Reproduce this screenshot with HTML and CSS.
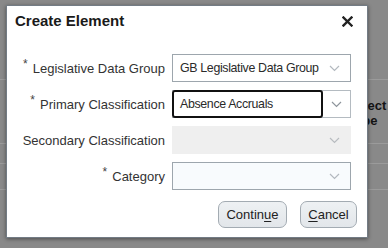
FILE: index.html
```html
<!DOCTYPE html>
<html>
<head>
<meta charset="utf-8">
<link rel="stylesheet" href="styles.css">
</head>
<body>
<div class="page">
  <div class="bg-row bg-row-top"></div>
  <div class="bg-row bg-row-head"><div class="bg-head">Select<br>Type</div></div>
  <div class="bg-row bg-row-a"></div>
  <div class="bg-row bg-row-b"></div>
  <div class="bg-row bg-row-c"></div>
</div>

<div class="dialog">
  <div class="dlg-header">
    <div class="dlg-title">Create Element</div>
    <div class="dlg-close">
      <svg width="11" height="11" viewBox="0 0 11 11"><path d="M1.5 1.5 L9.5 9.5 M9.5 1.5 L1.5 9.5" stroke="#222" stroke-width="2.4" stroke-linecap="square"/></svg>
    </div>
  </div>

  <div class="form">
    <div class="label"><span class="req">*</span>Legislative Data Group</div>
    <div class="field">
      <div class="field-text">GB Legislative Data Group</div>
      <div class="chev"><svg width="11" height="7" viewBox="0 0 11 7"><polyline points="1,1 5.5,5.5 10,1" fill="none" stroke="#b3b9bf" stroke-width="1.2"/></svg></div>
    </div>

    <div class="label"><span class="req">*</span>Primary Classification</div>
    <div class="field field-focus">
      <div class="field-text focus-box">Absence Accruals</div>
      <div class="chev chev-dark"><svg width="11" height="7" viewBox="0 0 11 7"><polyline points="1,1 5.5,5.5 10,1" fill="none" stroke="#8e959c" stroke-width="1.2"/></svg></div>
    </div>

    <div class="label">Secondary Classification</div>
    <div class="field field-disabled">
      <div class="field-text"></div>
      <div class="chev"><svg width="11" height="7" viewBox="0 0 11 7"><polyline points="1,1 5.5,5.5 10,1" fill="none" stroke="#b8bcc0" stroke-width="1.2"/></svg></div>
    </div>

    <div class="label"><span class="req">*</span>Category</div>
    <div class="field field-light">
      <div class="field-text"></div>
      <div class="chev"><svg width="11" height="7" viewBox="0 0 11 7"><polyline points="1,1 5.5,5.5 10,1" fill="none" stroke="#b3b9bf" stroke-width="1.2"/></svg></div>
    </div>
  </div>

  <div class="actions">
    <button class="btn btn-continue">Contin<u>u</u>e</button>
    <button class="btn btn-cancel"><u>C</u>ancel</button>
  </div>
</div>
</body>
</html>
```

FILE: styles.css
```css
* { box-sizing: border-box; }

html, body {
  margin: 0;
  padding: 0;
  width: 388px;
  height: 248px;
  overflow: hidden;
  background: #898989;
  font-family: "Liberation Sans", Arial, sans-serif;
}

.page {
  width: 388px;
  height: 248px;
  display: flex;
  flex-direction: column;
}

.bg-row {
  border-bottom: 1px solid #9b9b9b;
}
.bg-row-top { height: 80px; }
.bg-row-head {
  height: 64px;
  padding: 18px 0 0 348px;
}
.bg-head {
  font-weight: bold;
  font-size: 13px;
  line-height: 15px;
  color: #141414;
  white-space: nowrap;
}
.bg-row-a { height: 20px; }
.bg-row-b { height: 26px; }
.bg-row-c { height: 30px; border-bottom: none; }

.dialog {
  position: absolute;
  left: 6px;
  top: 5px;
  width: 362px;
  height: 233px;
  background: #fff;
  border: 1px solid #737c85;
  box-shadow: 0 1px 4px rgba(0,0,0,0.45);
  display: flex;
  flex-direction: column;
}

.dlg-header {
  display: flex;
  align-items: flex-start;
  justify-content: space-between;
  padding: 6px 14px 0 8px;
  height: 48px;
}
.dlg-title {
  font-size: 15px;
  line-height: 18px;
  font-weight: bold;
  color: #1a1a1a;
}
.dlg-close {
  padding-top: 4px;
  line-height: 0;
}

.form {
  display: grid;
  grid-template-columns: 159px 179px;
  grid-auto-rows: 28px;
  column-gap: 6px;
  row-gap: 8px;
}

.label {
  display: flex;
  align-items: center;
  justify-content: flex-end;
  padding-right: 1px;
  font-size: 13px;
  color: #333;
  white-space: nowrap;
}
.req {
  font-size: 12px;
  color: #444;
  margin-right: 5px;
  position: relative;
  top: -4px;
}

.field {
  display: flex;
  border: 1px solid #9da6ad;
  background: #fff;
}
.field-text {
  flex: 1;
  min-width: 0;
  display: flex;
  align-items: center;
  padding-left: 7px;
  font-size: 12.4px;
  letter-spacing: -0.35px;
  color: #2a2a2a;
  white-space: nowrap;
  overflow: hidden;
}
.chev {
  width: 27px;
  display: flex;
  align-items: center;
  justify-content: center;
  padding-right: 4px;
}

.field-focus {
  border-color: #b4bbc1;
  border-left: none;
}
.focus-box {
  margin: -1px 0;
  border: 2px solid #111;
  border-radius: 3px;
  padding-left: 6px;
}
.chev-dark { padding-right: 0; }

.field-disabled {
  border-color: #efefef;
  background: #efefef;
}
.field-light {
  background: #f8fbfd;
}

.actions {
  display: flex;
  justify-content: flex-end;
  gap: 13px;
  padding: 11px 10px 0 0;
}
.btn {
  height: 27px;
  padding: 0;
  font-family: "Liberation Sans", Arial, sans-serif;
  font-size: 13px;
  color: #222;
  background: linear-gradient(#eef1f3, #e2e6ea);
  border: 1px solid #a3abb2;
  border-radius: 7px;
}
.btn u { text-decoration-thickness: 1px; text-underline-offset: 2px; }
.btn-continue { width: 69px; }
.btn-cancel { width: 57px; }
```
